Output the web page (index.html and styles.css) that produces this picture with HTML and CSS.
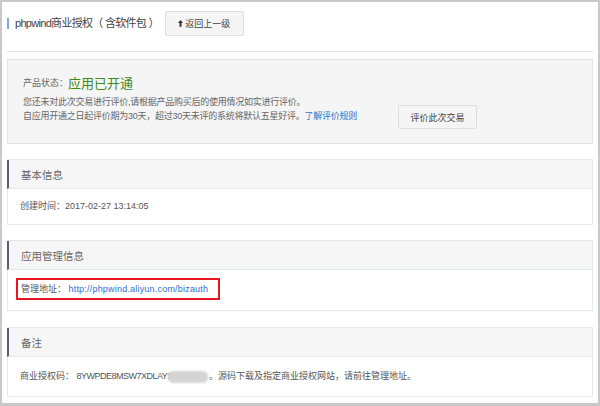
FILE: index.html
```html
<!DOCTYPE html>
<html lang="zh-CN">
<head>
<meta charset="utf-8">
<title>phpwind商业授权</title>
<link rel="stylesheet" href="styles.css">
</head>
<body>
<div class="frame">
  <div class="head">
    <h1 class="title">phpwind商业授权（ 含软件包 ）</h1>
    <button class="btn btn-back"><svg class="up" width="5" height="7" viewBox="0 0 5 7"><path d="M2.5 0 L5 3 H3.5 V6 H1.5 V3 H0 Z" fill="#333"/><rect x="1.5" y="6.2" width="2" height="0.8" fill="#333"/></svg>返回上一级</button>
  </div>

  <div class="status">
    <div class="status-text">
      <div class="status-row"><span class="status-label">产品状态：</span><span class="status-value">应用已开通</span></div>
      <p class="line">您还未对此次交易进行评价,请根据产品购买后的使用情况如实进行评价。</p>
      <p class="line">自应用开通之日起评价期为30天，超过30天未评的系统将默认五星好评。<a class="link" href="#">了解评价规则</a></p>
    </div>
    <button class="btn btn-rate">评价此次交易</button>
  </div>

  <div class="panel">
    <div class="panel-head">基本信息</div>
    <div class="panel-body">创建时间：2017-02-27 13:14:05</div>
  </div>

  <div class="panel">
    <div class="panel-head">应用管理信息</div>
    <div class="panel-body tight">
      <div class="mark">管理地址： <a class="link url" href="#">http://phpwind.aliyun.com/bizauth</a></div>
    </div>
  </div>

  <div class="panel last">
    <div class="panel-head">备注</div>
    <div class="panel-body note">商业授权码： <span class="code">8YWPDE8MSW7XDLAYS</span><span class="blur"></span>。源码下载及指定商业授权网站，请前往管理地址。</div>
  </div>
</div>
</body>
</html>
```

FILE: styles.css
```css
* { box-sizing: border-box; }
html, body { margin: 0; padding: 0; background: #fff; }
body {
  font-family: "Liberation Sans", "Noto Sans CJK SC", sans-serif;
  color: #555;
  font-size: 9px;
}
.frame {
  width: 600px;
  height: 406px;
  border: 2px solid #c8c8c8;
  border-bottom-width: 3px;
  padding: 0 5px;
  overflow: hidden;
}
.head {
  height: 50px;
  display: flex;
  align-items: center;
  padding-top: 9px;
  padding-bottom: 15px;
  border-bottom: 1px solid #e3e3e3;
}
.title {
  margin: 0;
  font-size: 11px;
  line-height: 11px;
  font-weight: normal;
  color: #444;
  border-left: 2px solid #7fa9d6;
  padding-left: 6px;
  letter-spacing: -0.7px;
  white-space: pre;
}
.btn {
  font-family: inherit;
  background: #f5f5f5;
  border: 1px solid #dedede;
  border-radius: 2px;
  color: #444;
  font-size: 9px;
  padding: 0;
  display: inline-flex;
  align-items: center;
  justify-content: center;
}
.btn-back {
  margin-left: 6px;
  width: 79px;
  height: 25px;
}
.up { margin-right: 2px; margin-top: -1px; }
.status {
  margin-top: 7px;
  background: #f5f5f5;
  border: 1px solid #e4e4e4;
  display: flex;
  align-items: flex-start;
  padding: 13px 15px 14px;
}
.status-text { flex: 0 0 375px; }
.status-row {
  height: 18px;
  display: flex;
  align-items: center;
}
.status-label { color: #666; font-size: 9px; }
.status-value { color: #3f8a1c; font-size: 13px; }
.line {
  margin: 0;
  line-height: 14px;
  color: #666;
  letter-spacing: -0.25px;
}
.status-row + .line { margin-top: 4px; }
.link { color: #2f6fce; text-decoration: none; }
.url { letter-spacing: 0.2px; }
.btn-rate {
  margin-top: 32px;
  width: 79px;
  height: 24px;
}
.panel {
  margin-top: 15px;
  border: 1px solid #e3e8ef;
}
.panel.last { margin-top: 16px; }
.panel-head {
  height: 29px;
  margin-left: -1px;
  background: #f6f6f6;
  border-left: 2px solid #5d5d78;
  border-bottom: 1px solid #e3e8ef;
  padding-left: 12px;
  display: flex;
  align-items: center;
  font-size: 10.5px;
  color: #666;
}
.panel-body {
  padding: 10px 12px;
  line-height: 15px;
  color: #555;
}
.panel-body.tight { padding: 8px 8px 10px; }
.mark {
  width: 204px;
  height: 22px;
  border: 2px solid #e8161e;
  padding-left: 3px;
  display: flex;
  align-items: center;
  white-space: pre;
}
.panel-body.note { padding: 12px 12px 12px; }
.code { letter-spacing: -0.5px; }
.blur {
  display: inline-block;
  width: 40px;
  height: 12px;
  margin-left: -5px;
  margin-right: 1px;
  vertical-align: middle;
  background: #d4d4d4;
  border-radius: 5px;
  filter: blur(1px);
}
```
